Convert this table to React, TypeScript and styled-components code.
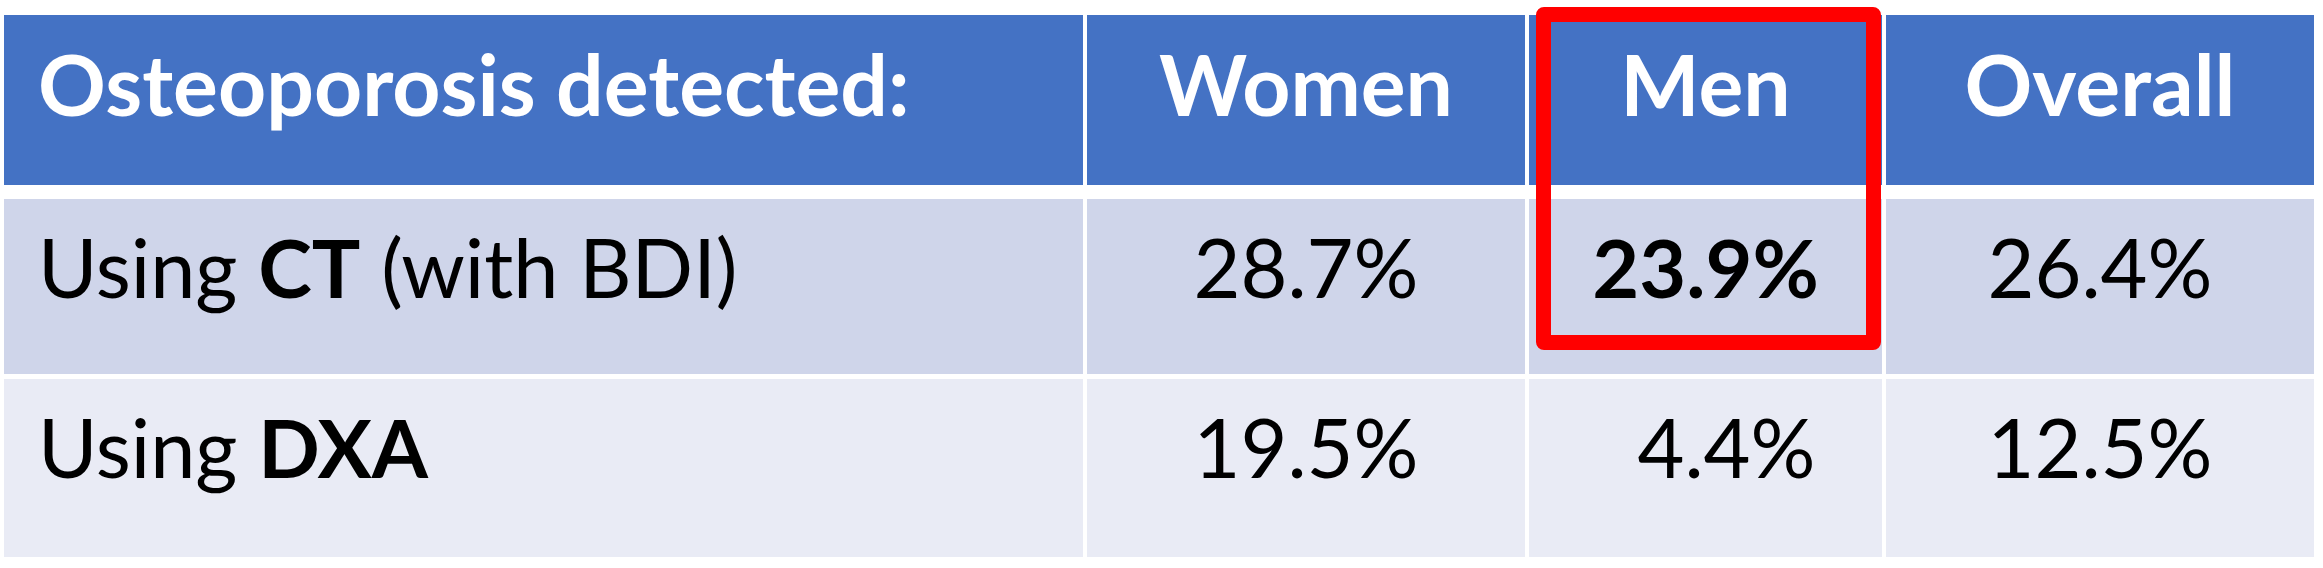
import React from "react";
import styled, { createGlobalStyle } from "styled-components";

const GlobalStyle = createGlobalStyle`
  html, body {
    margin: 0;
    padding: 0;
    background: #ffffff;
  }
  body {
    font-family: Lato, "Liberation Sans", sans-serif;
  }
`;

const Page = styled.div`
  width: 2323px;
  height: 568px;
  box-sizing: border-box;
  padding: 15px 9px 0 4px;
  background: #ffffff;
`;

const Table = styled.div`
  display: grid;
  grid-template-columns: 1079px 438px 353px 428px;
  grid-template-rows: 179px 175px 178px;
  column-gap: 4px;
  row-gap: 5px;
`;

const HeadCell = styled.div<{ $col: number }>`
  grid-row: 1;
  grid-column: ${(p) => p.$col};
  align-self: start;
  height: 170px;
  box-sizing: border-box;
  background: #4472c4;
  color: #ffffff;
  font-weight: 700;
  font-size: 84px;
  line-height: 1;
  padding: 27px 0 0 ${(p) => (p.$col === 1 ? 34 : 0)}px;
  text-align: ${(p) => (p.$col === 1 ? "left" : "center")};
  white-space: nowrap;
`;

const BodyCell = styled.div<{ $row: number; $col: number; $shift?: number }>`
  grid-row: ${(p) => p.$row};
  grid-column: ${(p) => p.$col};
  box-sizing: border-box;
  background: ${(p) => (p.$row === 2 ? "#cfd5ea" : "#e9ebf5")};
  color: #000000;
  font-size: 81px;
  line-height: 1;
  padding-top: 27px;
  padding-left: ${(p) => (p.$col === 1 ? 34 : p.$shift ?? 0)}px;
  text-align: ${(p) => (p.$col === 1 ? "left" : "center")};
  white-space: nowrap;

  b {
    font-weight: 700;
  }
`;

const Highlight = styled.div`
  grid-column: 3;
  grid-row: 1 / 3;
  margin: -8px 1px 24px 7px;
  border: 15px solid #ff0000;
  border-radius: 8px;
  pointer-events: none;
  z-index: 1;
`;

const headers = ["Osteoporosis detected:", "Women", "Men", "Overall"];

const rows = [
  {
    label: (
      <>
        Using <b>CT</b> (with BDI)
      </>
    ),
    women: <>28.7%</>,
    men: <b>23.9%</b>,
    menShift: 0,
    overall: <>26.4%</>,
  },
  {
    label: (
      <>
        Using <b>DXA</b>
      </>
    ),
    women: <>19.5%</>,
    men: <>4.4%</>,
    menShift: 42,
    overall: <>12.5%</>,
  },
];

export default function App() {
  return (
    <>
      <GlobalStyle />
      <Page>
        <Table>
          {headers.map((h, i) => (
            <HeadCell key={h} $col={i + 1}>
              {h}
            </HeadCell>
          ))}
          {rows.map((row, i) => (
            <React.Fragment key={i}>
              <BodyCell $row={i + 2} $col={1}>
                {row.label}
              </BodyCell>
              <BodyCell $row={i + 2} $col={2}>
                {row.women}
              </BodyCell>
              <BodyCell $row={i + 2} $col={3} $shift={row.menShift}>
                {row.men}
              </BodyCell>
              <BodyCell $row={i + 2} $col={4}>
                {row.overall}
              </BodyCell>
            </React.Fragment>
          ))}
          <Highlight />
        </Table>
      </Page>
    </>
  );
}
